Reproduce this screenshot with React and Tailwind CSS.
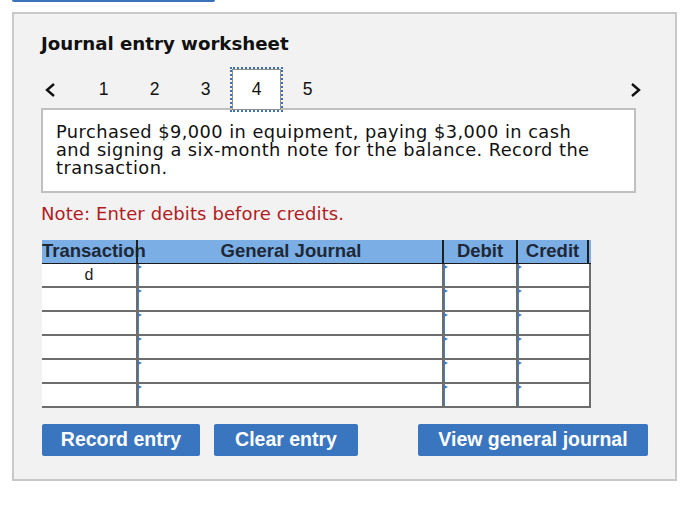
import React from "react";

const verdana = { fontFamily: '"DejaVu Sans", Verdana, sans-serif' };
const helv = { fontFamily: '"Liberation Sans", Arial, Helvetica, sans-serif' };

function Marker() {
  return (
    <span className="absolute left-0 top-[1px] w-0 h-0 border-y-[2.5px] border-y-transparent border-l-[4px] border-l-[#3f7ac4]" />
  );
}

function InputCell({ w }) {
  return (
    <div className={`relative h-full bg-white border-r-2 border-[#6d6d6d] ${w}`}>
      <div className="h-full border-l border-[#4a80c4]" />
      <Marker />
    </div>
  );
}

function BodyRow({ label }) {
  return (
    <div className="flex h-[24px] border-b-2 border-[#6d6d6d]">
      <div className="w-[96px] h-full bg-white border-r-2 border-[#6d6d6d] flex items-center justify-center text-[16px] text-[#222]" style={helv}>
        {label}
      </div>
      <InputCell w="w-[306px]" />
      <InputCell w="w-[74px]" />
      <InputCell w="w-[73px]" />
    </div>
  );
}

export default function App() {
  const steps = [1, 2, 3, 4, 5];
  return (
    <div className="w-[686px] h-[518px] bg-white relative overflow-hidden">
      <div className="ml-[12px] w-[203px] h-[2px] bg-[#3b72b9] rounded-b-sm" />
      <div className="ml-[12px] mt-[10px] w-[665px] h-[469px] bg-[#f2f2f2] border-2 border-[#c8c8c8] pl-[27px] pt-[19px]">
        <h1 className="text-[18.2px] leading-[22px] font-bold text-[#111]" style={verdana}>
          Journal entry worksheet
        </h1>

        <div className="mt-[12px] w-[604px] h-[45px] flex items-center" style={helv}>
          <div className="w-[37px] pl-[3px] flex items-center">
            <svg width="12" height="16" viewBox="0 0 12 16">
              <polyline points="10,2 3,8 10,14" fill="none" stroke="#111" strokeWidth="2.4" />
            </svg>
          </div>
          {steps.map((s) =>
            s === 4 ? (
              <div key={s} className="relative z-10 w-[51px] h-[43px] flex items-center justify-center">
                <div className="w-[49px] h-[41px] bg-white border border-[#8f8f8f] outline-2 outline-dotted outline-[#3f6fb5] flex items-center justify-center text-[17.5px] text-[#111]">
                  {s}
                </div>
              </div>
            ) : (
              <div key={s} className="w-[51px] text-center text-[17.5px] text-[#111]">
                {s}
              </div>
            )
          )}
          <div className="flex-1" />
          <svg width="12" height="16" viewBox="0 0 12 16" className="mr-[3px]">
            <polyline points="2,2 9,8 2,14" fill="none" stroke="#111" strokeWidth="2.4" />
          </svg>
        </div>

        <div className="-mt-[4px] w-[595px] h-[85px] bg-white border-2 border-[#c0c0c0] pl-[13px] pr-[32px] pt-[13px] text-[17.8px] leading-[18px] tracking-[0.45px] text-[#111]" style={verdana}>
          Purchased $9,000 in equipment, paying $3,000 in cash and signing a six-month note for the balance. Record the transaction.
        </div>

        <p className="mt-[11px] text-[18px] leading-[20px] tracking-[0.1px] text-[#b01c22]" style={verdana}>
          Note: Enter debits before credits.
        </p>

        <div className="mt-[16px] ml-[1px] w-[549px]" style={helv}>
          <div className="flex h-[24px] bg-[#7aaee5] border-b-[1.5px] border-[#1a1a1a] text-[18.5px] font-bold text-[#1e2836] leading-[22px]">
            <div className="w-[96px] whitespace-nowrap">Transaction</div>
            <div className="relative w-[306px] border-l-2 border-[#1f1f1f] text-center -ml-[2px] pl-[2px]">General Journal</div>
            <div className="w-[74px] border-l-2 border-[#1f1f1f] text-center">Debit</div>
            <div className="w-[73px] border-x-2 border-[#1f1f1f] text-center">Credit</div>
          </div>
          <BodyRow label="d" />
          <BodyRow />
          <BodyRow />
          <BodyRow />
          <BodyRow />
          <BodyRow />
        </div>

        <div className="mt-[16px] ml-[1px] w-[606px] flex text-white text-[19.5px] font-bold" style={helv}>
          <button className="w-[158px] h-[32px] bg-[#3a76c0] rounded-[2px]">Record entry</button>
          <button className="ml-[14px] w-[144px] h-[32px] bg-[#3a76c0] rounded-[2px]">Clear entry</button>
          <div className="flex-1" />
          <button className="w-[230px] h-[32px] bg-[#3a76c0] rounded-[2px]">View general journal</button>
        </div>
      </div>
    </div>
  );
}
